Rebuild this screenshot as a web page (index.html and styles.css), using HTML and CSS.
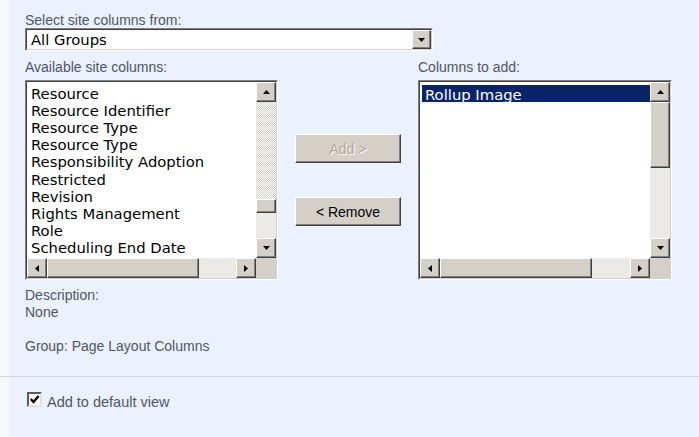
FILE: index.html
```html
<!DOCTYPE html>
<html>
<head>
<meta charset="utf-8">
<link rel="stylesheet" href="styles.css">
</head>
<body>
<div class="upper">
  <div class="panel">
    <div class="label">Select site columns from:</div>
    <div class="select sunken">
      <div class="sunken-in select-in">
        <div class="select-text">All Groups</div>
        <div class="btn3d drop"><svg width="7" height="4" viewBox="0 0 7 4"><polygon points="0,0 7,0 3.5,4" fill="#000"/></svg></div>
      </div>
    </div>
    <div class="row">
      <div class="col">
        <div class="label">Available site columns:</div>
        <div class="listbox sunken">
          <div class="sunken-in listbox-in left-in">
            <div class="content">
              <ul class="items shifted">
                <li>Resource</li>
                <li>Resource Identifier</li>
                <li>Resource Type</li>
                <li>Resource Type</li>
                <li>Responsibility Adoption</li>
                <li>Restricted</li>
                <li>Revision</li>
                <li>Rights Management</li>
                <li>Role</li>
                <li>Scheduling End Date</li>
              </ul>
            </div>
            <div class="vscroll">
              <div class="btn3d arrow"><svg width="7" height="4" viewBox="0 0 7 4"><polygon points="0,4 7,4 3.5,0" fill="#000"/></svg></div>
              <div class="track dither lt-top"></div>
              <div class="btn3d lt-thumb"></div>
              <div class="track lt-bot"></div>
              <div class="btn3d arrow"><svg width="7" height="4" viewBox="0 0 7 4"><polygon points="0,0 7,0 3.5,4" fill="#000"/></svg></div>
            </div>
            <div class="hscroll">
              <div class="btn3d arrow"><svg width="4" height="7" viewBox="0 0 4 7"><polygon points="4,0 4,7 0,3.5" fill="#000"/></svg></div>
              <div class="btn3d hthumb"></div>
              <div class="track htrack"></div>
              <div class="btn3d arrow"><svg width="4" height="7" viewBox="0 0 4 7"><polygon points="0,0 0,7 4,3.5" fill="#000"/></svg></div>
            </div>
            <div class="corner"></div>
          </div>
        </div>
      </div>
      <div class="buttons">
        <div class="btn3d push add">Add &gt;</div>
        <div class="btn3d push remove">&lt; Remove</div>
      </div>
      <div class="col col-right">
        <div class="label">Columns to add:</div>
        <div class="listbox sunken">
          <div class="sunken-in listbox-in right-in">
            <div class="content">
              <ul class="items">
                <li class="selected">Rollup Image</li>
              </ul>
            </div>
            <div class="vscroll">
              <div class="btn3d arrow"><svg width="7" height="4" viewBox="0 0 7 4"><polygon points="0,4 7,4 3.5,0" fill="#000"/></svg></div>
              <div class="btn3d rt-thumb"></div>
              <div class="track rt-bot"></div>
              <div class="btn3d arrow"><svg width="7" height="4" viewBox="0 0 7 4"><polygon points="0,0 7,0 3.5,4" fill="#000"/></svg></div>
            </div>
            <div class="hscroll">
              <div class="btn3d arrow"><svg width="4" height="7" viewBox="0 0 4 7"><polygon points="4,0 4,7 0,3.5" fill="#000"/></svg></div>
              <div class="btn3d hthumb"></div>
              <div class="track htrack"></div>
              <div class="btn3d arrow"><svg width="4" height="7" viewBox="0 0 4 7"><polygon points="0,0 0,7 4,3.5" fill="#000"/></svg></div>
            </div>
            <div class="corner"></div>
          </div>
        </div>
      </div>
    </div>
    <div class="desc">Description:<br>None</div>
    <div class="desc group">Group: Page Layout Columns</div>
  </div>
</div>
<div class="divider"></div>
<div class="lower">
  <div class="panel2">
    <div class="check">
      <span class="box"><svg width="11" height="11" viewBox="0 0 11 11"><polyline points="1.8,5 4.5,8 9.6,2" fill="none" stroke="#000" stroke-width="2.4"/></svg></span>
      <span class="check-text">Add to default view</span>
    </div>
  </div>
</div>
</body>
</html>
```

FILE: styles.css
```css
html, body {
  margin: 0;
  padding: 0;
}
body {
  width: 699px;
  height: 437px;
  overflow: hidden;
  background: #F6F9FE;
  font-family: "Liberation Sans", Arial, sans-serif;
  font-size: 14px;
  color: #4F5667;
}
.upper {
  padding-left: 9px;
}
.panel {
  background: #EBF2FD;
  height: 376px;
  box-sizing: border-box;
  padding: 12px 0 0 16px;
}
.label {
  line-height: 16px;
  white-space: nowrap;
}
.sunken {
  box-sizing: border-box;
  border: 1px solid;
  border-color: #808080 #FFFFFF #FFFFFF #808080;
}
.sunken-in {
  box-sizing: border-box;
  border: 1px solid;
  border-color: #404040 #D4D0C8 #D4D0C8 #404040;
  height: 100%;
}
.select {
  width: 408px;
  height: 23px;
}
.select-in {
  display: flex;
  background: #fff;
}
.select-text {
  flex: 1;
  font-family: "DejaVu Sans", Verdana, sans-serif;
  font-size: 14.8px;
  line-height: 18px;
  padding: 1px 0 0 4px;
  color: #000;
}
.btn3d {
  box-sizing: border-box;
  background: #D4D0C8;
  border: 1px solid;
  border-color: #FFFFFF #404040 #404040 #FFFFFF;
  box-shadow: inset -1px -1px 0 #808080;
  display: flex;
  align-items: center;
  justify-content: center;
  flex: none;
}
.drop {
  width: 19px;
  height: 19px;
}
.row {
  display: flex;
  margin-top: 8px;
}
.col {
  width: 253px;
  flex: none;
}
.col-right {
  width: 254px;
}
.listbox {
  margin-top: 5px;
  height: 200px;
}
.listbox-in {
  display: grid;
  grid-template-rows: 176px 20px;
  background: #fff;
}
.left-in {
  grid-template-columns: 229px 20px;
}
.right-in {
  grid-template-columns: 230px 20px;
}
.content {
  overflow: hidden;
  background: #fff;
}
.items {
  list-style: none;
  margin: 0;
  padding: 0;
  font-family: "DejaVu Sans", Verdana, sans-serif;
  font-size: 14.8px;
  line-height: 17.17px;
  color: #000;
  white-space: nowrap;
}
.items li {
  padding-left: 4px;
}
.shifted {
  padding-top: 2.8px;
}
.items .selected {
  background: #0A246A;
  color: #fff;
  margin: 3px 0 0 2px;
  padding-left: 3px;
  height: 17px;
  line-height: 19px;
}
.vscroll {
  display: flex;
  flex-direction: column;
  width: 20px;
}
.hscroll {
  display: flex;
}
.arrow {
  width: 20px;
  height: 20px;
}
.track {
  background: #ECEAE6;
}
.dither {
  background-color: #fff;
  background-image: repeating-conic-gradient(#D4D0C8 0% 25%, #FFFFFF 0% 50%);
  background-size: 2px 2px;
}
.lt-top { height: 97px; }
.lt-thumb { height: 14px; }
.lt-bot { height: 25px; }
.rt-thumb { height: 66px; }
.rt-bot { height: 70px; }
.hthumb {
  width: 152px;
  height: 20px;
}
.htrack {
  flex: 1;
}
.corner {
  background: #D4D0C8;
}
.buttons {
  width: 106px;
  flex: none;
  margin: 0 17px;
  display: flex;
  flex-direction: column;
}
.push {
  height: 29px;
  font-size: 14px;
  white-space: nowrap;
}
.add {
  margin-top: 75px;
  color: #ACA899;
  text-shadow: 1px 1px 0 #fff;
}
.remove {
  margin-top: 34px;
  color: #000;
}
.desc {
  margin-top: 7px;
  line-height: 17px;
}
.group {
  margin-top: 17px;
}
.divider {
  height: 1px;
  background: #D3D6DB;
}
.lower {
  padding-left: 9px;
}
.panel2 {
  background: #EBF2FD;
  height: 60px;
  box-sizing: border-box;
  padding: 15px 0 0 18px;
}
.check {
  display: flex;
  align-items: flex-start;
}
.box {
  box-sizing: border-box;
  width: 15px;
  height: 15px;
  background: #fff;
  border: 2px solid;
  border-color: #5A5A5A #E4E2DC #E4E2DC #5A5A5A;
  display: flex;
  align-items: center;
  justify-content: center;
}
.check-text {
  margin: 2px 0 0 5px;
  font-size: 14.5px;
  line-height: 16px;
}
```
